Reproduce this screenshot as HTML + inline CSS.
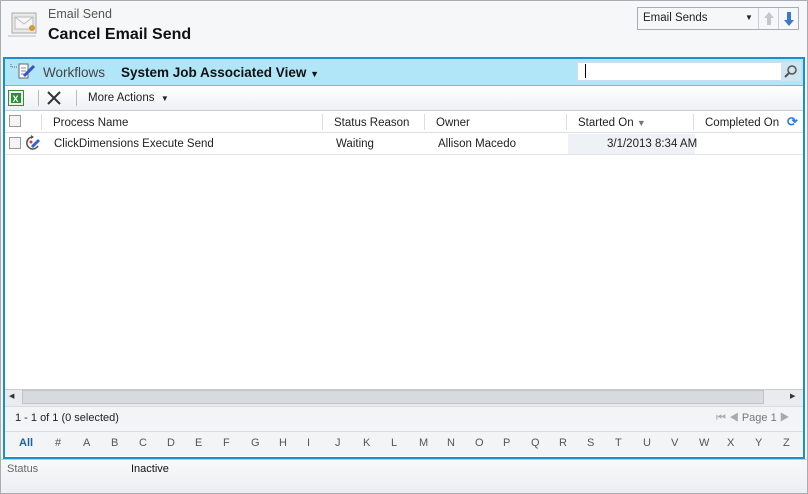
<!DOCTYPE html>
<html><head><style>
*{box-sizing:border-box;margin:0;padding:0}
body{width:808px;height:494px;font-family:"Liberation Sans",sans-serif;font-size:11.5px;color:#222;background:#f6f7f9;position:relative;overflow:hidden}
.abs{position:absolute}
</style></head><body>
<div class="abs" style="left:0;top:0;width:808px;height:494px;border:1px solid #a8adb5"></div>
<svg class="abs" style="left:8px;top:10px" width="32" height="28"><rect x="4" y="3" width="24" height="20" fill="#e8e8e8" stroke="#aaa"/><rect x="7" y="7" width="18" height="12" fill="#f6f6f6" stroke="#bbb"/><path d="M7 7l9 7 9-7" fill="none" stroke="#bbb"/><circle cx="24" cy="18" r="3" fill="#e8912a"/><circle cx="24" cy="18" r="1.2" fill="#7c4"/><path d="M0 26h28" stroke="#bbb"/></svg>
<div class="abs" style="left:48px;top:7px;font-size:12.5px;color:#555">Email Send</div>
<div class="abs" style="left:48px;top:26px;font-size:16px;font-weight:bold;color:#111">Cancel Email Send</div>
<div class="abs" style="left:637px;top:7px;width:162px;height:23px;border:1px solid #a8adb5;background:#f6f7f9"></div>
<div class="abs" style="left:643px;top:12px;font-size:11.5px">Email Sends</div>
<div class="abs" style="left:745px;top:13px;font-size:8px">▼</div>
<div class="abs" style="left:758px;top:8px;width:1px;height:21px;background:#ccd"></div>
<div class="abs" style="left:778px;top:8px;width:1px;height:21px;background:#ccd"></div>
<svg class="abs" style="left:762px;top:11px" width="14" height="16"><path d="M7 1l-5 6h3v7h4v-7h3z" fill="#c4c8cc"/></svg>
<svg class="abs" style="left:782px;top:11px" width="14" height="16"><path d="M7 15l-5-6h3v-8h4v8h3z" fill="#3c78c8"/></svg>
<div class="abs" style="left:3px;top:57px;width:802px;height:402px;border:2px solid #1a8fc9;background:#fff"></div>
<div class="abs" style="left:5px;top:59px;width:798px;height:27px;background:#b1e6f9;border-bottom:1px solid #9ab"></div>
<svg class="abs" style="left:10px;top:62px" width="30" height="20"><path d="M1 2v3h6" stroke="#666" stroke-dasharray="1 1" fill="none"/><rect x="9" y="2" width="9" height="14" fill="#fff" stroke="#667"/><path d="M11 6h5M11 9h5M11 12h5" stroke="#889"/><path d="M14 14l10-10" stroke="#35c" stroke-width="3"/></svg>
<div class="abs" style="left:43px;top:65px;font-size:13.5px;color:#444">Workflows</div>
<div class="abs" style="left:121px;top:65px;font-size:13.5px;font-weight:bold;color:#111">System Job Associated View <span style="font-size:9px">▼</span></div>
<div class="abs" style="left:577px;top:62px;width:205px;height:19px;background:#fff;border:1px solid #cde"></div>
<div class="abs" style="left:585px;top:64px;width:1px;height:14px;background:#000"></div>
<div class="abs" style="left:781px;top:62px;width:20px;height:19px;background:#cde6ef"></div>
<svg class="abs" style="left:784px;top:64px" width="14" height="14"><circle cx="8" cy="6" r="4" fill="none" stroke="#555" stroke-width="1.5"/><path d="M5 9l-4 4" stroke="#555" stroke-width="2"/></svg>
<div class="abs" style="left:5px;top:86px;width:798px;height:25px;background:linear-gradient(#fff,#eef0f3);border-bottom:1px solid #c8ccd2"></div>
<svg class="abs" style="left:8px;top:90px" width="16" height="16"><rect x=".5" y=".5" width="15" height="15" fill="#e8f2e8" stroke="#3a8a3a"/><rect x="3" y="3" width="10" height="10" fill="#2e8b3a"/><text x="4.5" y="12" font-size="9" fill="#fff" font-family="Liberation Sans" font-weight="bold">X</text></svg>
<div class="abs" style="left:38px;top:90px;width:1px;height:16px;background:#bbb"></div>
<svg class="abs" style="left:47px;top:91px" width="14" height="14"><path d="M1 1l12 12M13 1L1 13" stroke="#333" stroke-width="2"/></svg>
<div class="abs" style="left:76px;top:90px;width:1px;height:16px;background:#bbb"></div>
<div class="abs" style="left:88px;top:92px;font-size:11.5px">More Actions &nbsp;<span style="font-size:8px">▼</span></div>
<div class="abs" style="left:5px;top:111px;width:798px;height:22px;background:#fff;border-bottom:1px solid #dde"></div>
<div class="abs" style="left:9px;top:115px;width:12px;height:12px;border:1px solid #999;background:#f4f4f4"></div>
<div class="abs" style="left:41px;top:114px;width:1px;height:16px;background:#ddd"></div>
<div class="abs" style="left:322px;top:114px;width:1px;height:16px;background:#ddd"></div>
<div class="abs" style="left:424px;top:114px;width:1px;height:16px;background:#ddd"></div>
<div class="abs" style="left:566px;top:114px;width:1px;height:16px;background:#ddd"></div>
<div class="abs" style="left:693px;top:114px;width:1px;height:16px;background:#ddd"></div>
<div class="abs" style="left:53px;top:117px">Process Name</div>
<div class="abs" style="left:334px;top:117px">Status Reason</div>
<div class="abs" style="left:436px;top:117px">Owner</div>
<div class="abs" style="left:578px;top:117px">Started On <span style="color:#777;font-size:9px">▼</span></div>
<div class="abs" style="left:705px;top:117px">Completed On</div>
<div class="abs" style="left:787px;top:114px;color:#2a7de1;font-size:13px;font-weight:bold">⟳</div>
<div class="abs" style="left:568px;top:134px;width:127px;height:21px;background:#eef1f5"></div>
<div class="abs" style="left:5px;top:154px;width:798px;height:1px;background:#e2e4e8"></div>
<div class="abs" style="left:9px;top:137px;width:12px;height:12px;border:1px solid #999;background:#f4f4f4"></div>
<svg class="abs" style="left:24px;top:135px" width="18" height="16"><path d="M9 2a6 6 0 1 0 5 9" fill="none" stroke="#555" stroke-width="1.6"/><path d="M7 0l3 2-3 2" fill="#555"/><path d="M8 12l7-7" stroke="#36c" stroke-width="3"/><circle cx="7" cy="7" r="1.5" fill="#d33"/></svg>
<div class="abs" style="left:54px;top:138px">ClickDimensions Execute Send</div>
<div class="abs" style="left:336px;top:138px">Waiting</div>
<div class="abs" style="left:438px;top:138px">Allison Macedo</div>
<div class="abs" style="left:607px;top:138px">3/1/2013 8:34 AM</div>
<div class="abs" style="left:5px;top:389px;width:798px;height:17px;background:#e9ebee;border-top:1px solid #c8ccd2"></div>
<div class="abs" style="left:22px;top:390px;width:742px;height:14px;background:#d7dbe0;border:1px solid #c0c4ca"></div>
<div class="abs" style="left:9px;top:392px;font-size:7px;color:#333">◀</div>
<div class="abs" style="left:790px;top:392px;font-size:7px;color:#333">▶</div>
<div class="abs" style="left:5px;top:406px;width:798px;height:25px;background:#f3f4f6;border-top:1px solid #d8dbe0"></div>
<div class="abs" style="left:15px;top:412px;font-size:11px">1 - 1 of 1 (0 selected)</div>
<div class="abs" style="left:716px;top:412px;font-size:11px;color:#777"><span style="color:#aaa">⏮ ◀</span> Page 1 <span style="color:#aaa">▶</span></div>
<div class="abs" style="left:5px;top:431px;width:798px;height:25px;background:#f3f4f6;border-top:1px solid #d8dbe0"></div>
<div class="abs" style="left:19px;top:437px;font-size:11px;color:#555;display:flex;gap:0">
<b style="color:#1a5fb4;width:36px">All</b><span style="width:28px">#</span><span style="width:28px">A</span><span style="width:28px">B</span><span style="width:28px">C</span><span style="width:28px">D</span><span style="width:28px">E</span><span style="width:28px">F</span><span style="width:28px">G</span><span style="width:28px">H</span><span style="width:28px">I</span><span style="width:28px">J</span><span style="width:28px">K</span><span style="width:28px">L</span><span style="width:28px">M</span><span style="width:28px">N</span><span style="width:28px">O</span><span style="width:28px">P</span><span style="width:28px">Q</span><span style="width:28px">R</span><span style="width:28px">S</span><span style="width:28px">T</span><span style="width:28px">U</span><span style="width:28px">V</span><span style="width:28px">W</span><span style="width:28px">X</span><span style="width:28px">Y</span><span style="width:20px">Z</span></div>
<div class="abs" style="left:1px;top:459px;width:806px;height:34px;background:linear-gradient(#f8f9fa,#eceef1);border-top:1px solid #c8ccd2"></div>
<div class="abs" style="left:7px;top:463px;font-size:11px;color:#666">Status</div>
<div class="abs" style="left:131px;top:463px;font-size:11px;color:#111">Inactive</div>
</body></html>
